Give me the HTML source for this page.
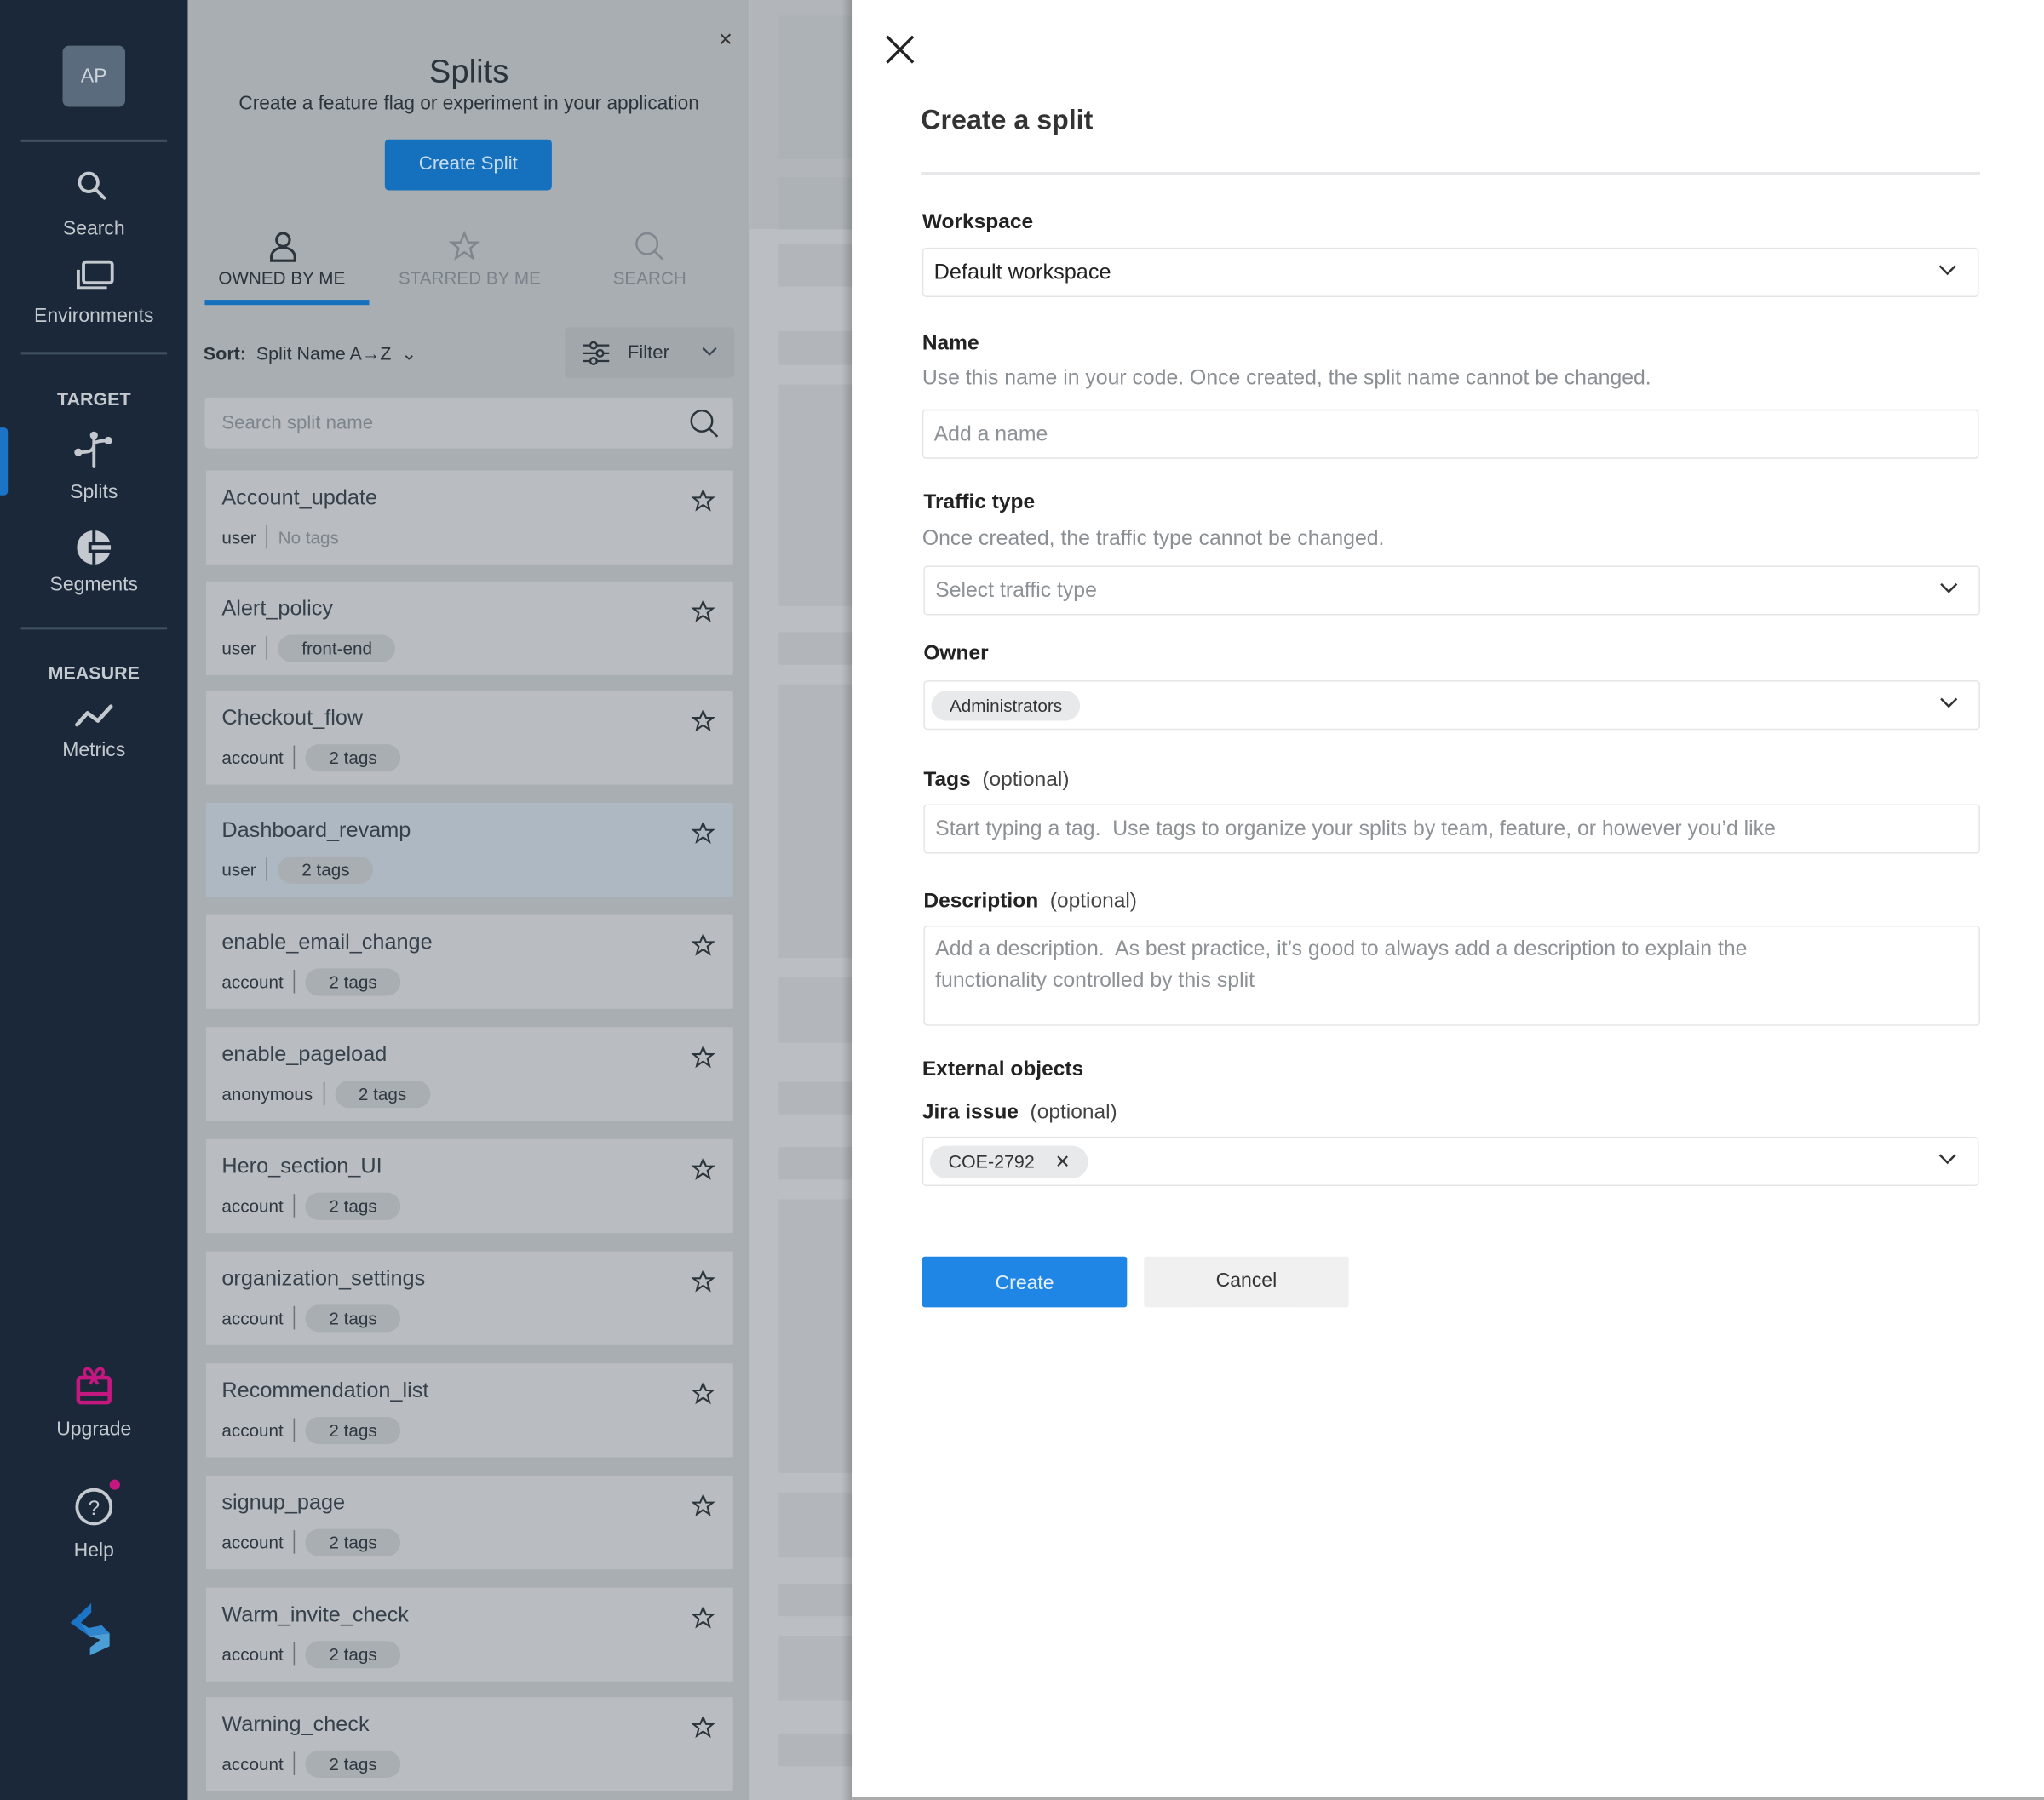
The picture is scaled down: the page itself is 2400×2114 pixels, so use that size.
<!DOCTYPE html>
<html><head><meta charset="utf-8"><style>
*{box-sizing:border-box;margin:0;padding:0}
html,body{width:2400px;height:2114px;overflow:hidden;background:#fff}
#r{position:absolute;left:0;top:0;width:1567px;height:1381px;transform:scale(1.5316,1.5308);transform-origin:0 0;font-family:"Liberation Sans",sans-serif;color:#2b3540}
.a{position:absolute}
.sb{left:0;top:0;width:144px;height:1381px;background:#1a2839}
.nl{position:absolute;width:144px;text-align:center;color:#c4c9cf;font-size:15px}
.hd{position:absolute;width:144px;text-align:center;color:#c4c9cf;font-size:14px;font-weight:bold}
.dv{position:absolute;left:16px;width:112px;height:2px;background:#3f5060}
.pn{left:144px;top:0;width:431px;height:1381px;background:#a9aeb2}
.card{position:absolute;left:158px;width:404px;height:72px;background:#b9bdc1}
.card .n{position:absolute;left:12px;top:12px;font-size:16.5px;color:#37414b}
.card .m{position:absolute;left:12px;top:40px;font-size:13.5px;color:#2f3841;display:flex;align-items:center;height:22px}
.card .m i{display:inline-block;width:1px;height:18px;background:#6c747c;margin:0 8px}
.card .m b{font-weight:normal;background:#a9aeb2;border-radius:11px;padding:3px 18px;color:#2f3841}
.card svg{position:absolute;right:14px;top:14px}
.lb{position:absolute;left:707px;font-size:16px;font-weight:bold;color:#222}
.lb span{font-weight:normal;color:#444}
.hp{position:absolute;left:707px;font-size:16.2px;color:#8a8f94}
.in{position:absolute;left:707px;width:810px;border:1.5px solid #e3e5e7;border-radius:3px;font-size:16.2px;color:#8d9296;padding-left:8px;display:flex;align-items:center}
.chev{position:absolute;right:16px;top:12px}
.chip{background:#e8e9ea;border-radius:12px;font-size:13.5px;color:#333;padding:4px 14px}
</style></head><body><div id="r">
<div class="a sb"></div>
<div class="a" style="left:48px;top:35px;width:48px;height:47px;background:#5a6b7d;border-radius:5px;color:#cfd5db;font-size:15px;text-align:center;line-height:47px">AP</div>
<div class="dv" style="top:107px"></div>
<svg class="a" style="left:58px;top:130px" width="26" height="26" viewBox="0 0 26 26"><circle cx="10" cy="10" r="7" fill="none" stroke="#c4c9cf" stroke-width="2.5"/><path d="M15 15l7 7" stroke="#c4c9cf" stroke-width="2.5" stroke-linecap="round"/></svg>
<div class="nl" style="top:167px">Search</div>
<svg class="a" style="left:57px;top:198px" width="32" height="28" viewBox="0 0 32 28"><rect x="7" y="3" width="22" height="16" rx="2" fill="none" stroke="#c4c9cf" stroke-width="2.5"/><path d="M3 9v14h22" fill="none" stroke="#c4c9cf" stroke-width="2.5"/></svg>
<div class="nl" style="top:234px">Environments</div>
<div class="dv" style="top:270px"></div>
<div class="hd" style="top:298px">TARGET</div>
<div class="a" style="left:0;top:328px;width:6px;height:52px;background:#1b74c5;border-radius:0 3px 3px 0"></div>
<svg class="a" style="left:56px;top:330px" width="32" height="30" viewBox="0 0 32 30"><path d="M16 4v24M4 17c6 0 12 0 12-6 0-2 5-3 11-3" fill="none" stroke="#c4c9cf" stroke-width="2.5" stroke-linecap="round"/><circle cx="16" cy="4" r="3" fill="#c4c9cf"/><circle cx="4" cy="17" r="3" fill="#c4c9cf"/><circle cx="27" cy="8" r="3" fill="#c4c9cf"/></svg>
<div class="nl" style="top:369px">Splits</div>
<svg class="a" style="left:58px;top:406px" width="28" height="28" viewBox="0 0 28 28"><circle cx="14" cy="14" r="13" fill="#c4c9cf"/><path d="M14 1v10h-3v6h3v10M14 11h13M14 17h13" stroke="#1a2839" stroke-width="2.5" fill="none"/></svg>
<div class="nl" style="top:440px">Segments</div>
<div class="dv" style="top:481px"></div>
<div class="hd" style="top:508px">MEASURE</div>
<svg class="a" style="left:55px;top:538px" width="34" height="22" viewBox="0 0 34 22"><path d="M4 18l8-9 8 6 10-11" fill="none" stroke="#c4c9cf" stroke-width="3" stroke-linecap="round" stroke-linejoin="round"/></svg>
<div class="nl" style="top:567px">Metrics</div>
<svg class="a" style="left:57px;top:1046px" width="30" height="32" viewBox="0 0 30 32"><rect x="3" y="11" width="24" height="19" rx="2" fill="none" stroke="#c4177f" stroke-width="3"/><rect x="3" y="22" width="24" height="3" fill="#c4177f"/><path d="M10 11c-3-2-3-7 0-7s4 4 5 7c1-3 2-7 5-7s3 5 0 7M15 11l-3 5M15 11l3 5" fill="none" stroke="#c4177f" stroke-width="2.3"/></svg>
<div class="nl" style="top:1088px">Upgrade</div>
<svg class="a" style="left:56px;top:1132px" width="40" height="40" viewBox="0 0 40 40"><circle cx="16" cy="24" r="13" fill="none" stroke="#c4c9cf" stroke-width="2.5"/><text x="16" y="30" font-size="16" fill="#c4c9cf" text-anchor="middle" font-family="Liberation Sans">?</text><circle cx="32" cy="7" r="4" fill="#c4177f"/></svg>
<div class="nl" style="top:1181px">Help</div>
<svg class="a" style="left:50px;top:1228px" width="38" height="44" viewBox="0 0 38 44"><path d="M20 2L4 17l14 10v-6L12 17l8-8z" fill="#1b74c5"/><path d="M18 27l16-2v10L19 42v-6l8-6z" fill="#4b9fd6"/><path d="M12 17l6 4 10-2 6 6-16 2z" fill="#2f86cc"/></svg>
<!-- splits panel -->
<div class="a pn"></div>
<div class="a" style="left:551px;top:20px;font-size:18px;color:#333">×</div>
<div class="a" style="left:144px;top:41px;width:431px;text-align:center;font-size:25px;color:#2b333b">Splits</div>
<div class="a" style="left:144px;top:72px;width:431px;text-align:center;font-size:14.8px;color:#2b333b">Create a feature flag or experiment in your application</div>
<div class="a" style="left:295px;top:107px;width:128px;height:39px;background:#1570be;border-radius:3px;color:#c9dcef;font-size:14.5px;text-align:center;line-height:39px">Create Split</div>
<svg class="a" style="left:204px;top:176px" width="26" height="26" viewBox="0 0 26 26"><circle cx="13" cy="8" r="5" fill="none" stroke="#2b333b" stroke-width="2"/><path d="M4 24v-3c0-4 4-7 9-7s9 3 9 7v3z" fill="none" stroke="#2b333b" stroke-width="2"/></svg>
<div class="a" style="left:153px;top:206px;width:126px;text-align:center;font-size:13.5px;color:#2b333b">OWNED BY ME</div>
<div class="a" style="left:157px;top:230px;width:126px;height:4px;background:#1570be"></div>
<svg class="a" style="left:344px;top:177px" width="24" height="24" viewBox="0 0 24 24"><path d="M12 2l3 7h7l-5.5 4.5 2 7.5L12 16.5 5.5 21l2-7.5L2 9h7z" fill="none" stroke="#7f868d" stroke-width="1.6"/></svg>
<div class="a" style="left:300px;top:206px;width:120px;text-align:center;font-size:13.5px;color:#7a8188">STARRED BY ME</div>
<svg class="a" style="left:485px;top:176px" width="26" height="26" viewBox="0 0 26 26"><circle cx="11" cy="11" r="8" fill="none" stroke="#7f868d" stroke-width="1.6"/><path d="M17 17l6 6" stroke="#7f868d" stroke-width="1.6"/></svg>
<div class="a" style="left:450px;top:206px;width:96px;text-align:center;font-size:13.5px;color:#7a8188">SEARCH</div>
<div class="a" style="left:156px;top:263px;font-size:14px;color:#2b333b"><b>Sort:</b>&nbsp; Split Name A→Z &nbsp;⌄</div>
<div class="a" style="left:433px;top:251px;width:130px;height:39px;background:#a2a7ab;border-radius:3px"></div>
<svg class="a" style="left:446px;top:261px" width="22" height="20" viewBox="0 0 22 20"><path d="M1 4h20M1 10h20M1 16h20" stroke="#2b333b" stroke-width="1.5"/><circle cx="9" cy="4" r="2.5" fill="#a2a7ab" stroke="#2b333b" stroke-width="1.5"/><circle cx="14" cy="10" r="2.5" fill="#a2a7ab" stroke="#2b333b" stroke-width="1.5"/><circle cx="9" cy="16" r="2.5" fill="#a2a7ab" stroke="#2b333b" stroke-width="1.5"/></svg>
<div class="a" style="left:481px;top:263px;font-size:14.5px;color:#2b333b">Filter</div>
<svg class="a" style="left:538px;top:266px" width="12" height="8" viewBox="0 0 12 8"><path d="M1 1l5 5 5-5" fill="none" stroke="#3a4550" stroke-width="1.4"/></svg>
<div class="a" style="left:157px;top:305px;width:405px;height:39px;background:#b9bdc1;border-radius:3px"></div>
<div class="a" style="left:170px;top:317px;font-size:14.5px;color:#7d848b">Search split name</div>
<svg class="a" style="left:528px;top:313px" width="24" height="24" viewBox="0 0 24 24"><circle cx="10" cy="10" r="8" fill="none" stroke="#2b333b" stroke-width="1.6"/><path d="M16 16l6 6" stroke="#2b333b" stroke-width="1.6"/></svg>
<div id="cards"></div>
<!-- middle strip -->
<div class="a" style="left:575px;top:0;width:78px;height:176px;background:#b2b6ba"></div>
<div class="a" style="left:575px;top:176px;width:78px;height:1205px;background:#bbbfc3"></div>
<div class="a" style="left:597px;top:12px;width:56px;height:110px;background:#adb2b6"></div>
<div class="a" style="left:597px;top:136px;width:56px;height:40px;background:#adb2b6"></div>
<div class="a" style="left:597px;top:187px;width:56px;height:33px;background:#b2b6ba"></div>
<div class="a" style="left:597px;top:254px;width:56px;height:26px;background:#b2b6ba"></div>
<div class="a" style="left:597px;top:295px;width:56px;height:170px;background:#b3b7bb"></div>
<div class="a" style="left:597px;top:485px;width:56px;height:25px;background:#b2b6ba"></div>
<div class="a" style="left:597px;top:525px;width:56px;height:210px;background:#b3b7bb"></div>
<div class="a" style="left:597px;top:750px;width:56px;height:50px;background:#b3b7bb"></div>
<div class="a" style="left:597px;top:830px;width:56px;height:25px;background:#b2b6ba"></div>
<div class="a" style="left:597px;top:880px;width:56px;height:25px;background:#b2b6ba"></div>
<div class="a" style="left:597px;top:920px;width:56px;height:210px;background:#b3b7bb"></div>
<div class="a" style="left:597px;top:1145px;width:56px;height:50px;background:#b3b7bb"></div>
<div class="a" style="left:597px;top:1215px;width:56px;height:25px;background:#b2b6ba"></div>
<div class="a" style="left:597px;top:1255px;width:56px;height:50px;background:#b3b7bb"></div>
<div class="a" style="left:597px;top:1330px;width:56px;height:25px;background:#b2b6ba"></div>
<div class="a" style="left:645px;top:0;width:8px;height:1381px;background:linear-gradient(90deg,rgba(0,0,0,0),rgba(0,0,0,.18))"></div>
<!-- right panel -->
<div class="a" style="left:653px;top:0;width:914px;height:1381px;background:#fff"></div>
<svg class="a" style="left:678px;top:26px" width="24" height="24" viewBox="0 0 24 24"><path d="M2 2l20 20M22 2L2 22" stroke="#222" stroke-width="2.2"/></svg>
<div class="a" style="left:706px;top:81px;font-size:21px;font-weight:bold;color:#333">Create a split</div>
<div class="a" style="left:706px;top:132px;width:812px;height:2px;background:#e6e7e8"></div>
<div class="lb" style="top:162px">Workspace</div>
<div class="in" style="top:190px;height:38px;color:#222;font-size:16.5px">Default workspace<svg class="chev" width="14" height="9" viewBox="0 0 14 9"><path d="M1 1l6 6 6-6" fill="none" stroke="#333" stroke-width="1.6"/></svg></div>
<div class="lb" style="top:255px">Name</div>
<div class="hp" style="top:281px">Use this name in your code. Once created, the split name cannot be changed.</div>
<div class="in" style="top:314px;height:38px">Add a name</div>
<div class="lb" style="top:377px;left:708px">Traffic type</div>
<div class="hp" style="top:404px">Once created, the traffic type cannot be changed.</div>
<div class="in" style="top:434px;height:38px;left:708px;width:810px">Select traffic type<svg class="chev" width="14" height="9" viewBox="0 0 14 9"><path d="M1 1l6 6 6-6" fill="none" stroke="#333" stroke-width="1.6"/></svg></div>
<div class="lb" style="top:493px;left:708px">Owner</div>
<div class="in" style="top:522px;height:38px;left:708px;width:810px;padding-left:5px"><span class="chip">Administrators</span><svg class="chev" width="14" height="9" viewBox="0 0 14 9"><path d="M1 1l6 6 6-6" fill="none" stroke="#333" stroke-width="1.6"/></svg></div>
<div class="lb" style="top:590px;left:708px">Tags&nbsp; <span>(optional)</span></div>
<div class="in" style="top:617px;height:38px;left:708px;width:810px">Start typing a tag.&nbsp; Use tags to organize your splits by team, feature, or however you’d like</div>
<div class="lb" style="top:683px;left:708px">Description&nbsp; <span>(optional)</span></div>
<div class="in" style="top:710px;height:77px;left:708px;width:810px;align-items:flex-start;padding-top:5px;line-height:24px">Add a description.&nbsp; As best practice, it’s good to always add a description to explain the<br>functionality controlled by this split</div>
<div class="lb" style="top:812px">External objects</div>
<div class="lb" style="top:845px">Jira issue&nbsp; <span>(optional)</span></div>
<div class="in" style="top:872px;height:38px;padding-left:5px"><span class="chip" style="font-size:14px">COE-2792 &nbsp;&nbsp; ✕</span><svg class="chev" width="14" height="9" viewBox="0 0 14 9"><path d="M1 1l6 6 6-6" fill="none" stroke="#333" stroke-width="1.6"/></svg></div>
<div class="a" style="left:707px;top:964px;width:157px;height:39px;background:#1f86e6;border-radius:2px;color:#e3f0fc;font-size:15px;text-align:center;line-height:42px">Create</div>
<div class="a" style="left:877px;top:964px;width:157px;height:39px;background:#f0f0f0;border-radius:2px;color:#333;font-size:15px;text-align:center;line-height:38px">Cancel</div>
<div class="a" style="left:653px;top:1379px;width:914px;height:2px;background:#aaa"></div>
</div>
<script>
var d=[["Account_update","user",""],["Alert_policy","user","front-end"],["Checkout_flow","account","2 tags"],["Dashboard_revamp","user","2 tags"],["enable_email_change","account","2 tags"],["enable_pageload","anonymous","2 tags"],["Hero_section_UI","account","2 tags"],["organization_settings","account","2 tags"],["Recommendation_list","account","2 tags"],["signup_page","account","2 tags"],["Warm_invite_check","account","2 tags"],["Warning_check","account","2 tags"]];
var t=[361,446,530,616,702,788,874,960,1046,1132,1218,1302],h="";
for(var i=0;i<d.length;i++){var tag=d[i][2]?'<b>'+d[i][2]+'</b>':'<span style="color:#7d848b">No tags</span>';
h+='<div class="card" style="top:'+t[i]+'px;'+(i==3?'background:#aeb8c3':'')+'"><div class="n">'+d[i][0]+'</div><div class="m">'+d[i][1]+'<i></i>'+tag+'</div><svg width="18" height="18" viewBox="0 0 24 24"><path d="M12 2l3 7h7l-5.5 4.5 2 7.5L12 16.5 5.5 21l2-7.5L2 9h7z" fill="none" stroke="#2b333b" stroke-width="1.8"/></svg></div>';}
document.getElementById("cards").innerHTML=h;
</script>
</body></html>
